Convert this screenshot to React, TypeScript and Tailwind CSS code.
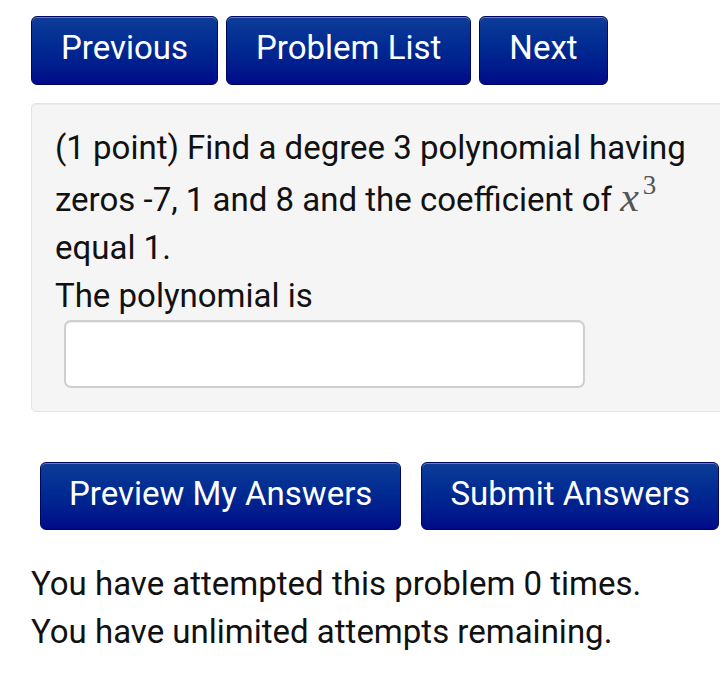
import React from "react";

const btn =
  "shrink-0 whitespace-nowrap rounded-[6px] border border-[#00065e] bg-linear-to-b from-[#0e3c98] to-[#000889] text-white text-[33px] leading-none pb-[6px] shadow-[inset_0_1px_0_rgba(255,255,255,0.35)]";

export default function App() {
  return (
    <div
      className="w-[720px] h-[700px] overflow-hidden bg-white text-[#111]"
      style={{ fontFamily: "Roboto, 'Liberation Sans', sans-serif" }}
    >
      <div className="flex gap-2 pl-[31px] pt-4">
        <button type="button" className={`${btn} h-[69px] px-[29px]`}>
          Previous
        </button>
        <button type="button" className={`${btn} h-[69px] px-[29px]`}>
          Problem List
        </button>
        <button type="button" className={`${btn} h-[69px] px-[29px]`}>
          Next
        </button>
      </div>

      <div className="ml-[31px] mt-[18px] w-[720px] rounded-[5px] border border-[#e3e3e3] bg-[#f5f5f5] pl-[23px] pr-6 pt-5 pb-[23px] shadow-[inset_0_1px_1px_rgba(0,0,0,0.05)]">
        <p className="text-[33px] leading-[48px] w-[640px]">
          (1 point) Find a degree 3 polynomial having zeros -7, 1 and 8 and the
          coefficient of{" "}
          <span
            className="italic text-[42px] leading-[50px] text-[#555]"
            style={{ fontFamily: "'Liberation Serif', 'DejaVu Serif', serif" }}
          >
            x
            <sup className="not-italic text-[27px] -top-[17px] ml-[4px]">3</sup>
          </span>{" "}
          equal 1.
          <br />
          The polynomial is
        </p>
        <input
          type="text"
          className="ml-[9px] block h-[68px] w-[521px] rounded-[7px] border-2 border-[#cfcfcf] bg-white shadow-[inset_0_1px_1px_rgba(0,0,0,0.08)]"
        />
      </div>

      <div className="flex gap-5 pl-10 mt-[50px]">
        <button type="button" className={`${btn} h-[68px] px-[28px]`}>
          Preview My Answers
        </button>
        <button type="button" className={`${btn} h-[68px] px-[28px]`}>
          Submit Answers
        </button>
      </div>

      <div className="pl-[31px] mt-[30px] text-[33px] leading-[48px]">
        <p>You have attempted this problem 0 times.</p>
        <p>You have unlimited attempts remaining.</p>
      </div>
    </div>
  );
}
